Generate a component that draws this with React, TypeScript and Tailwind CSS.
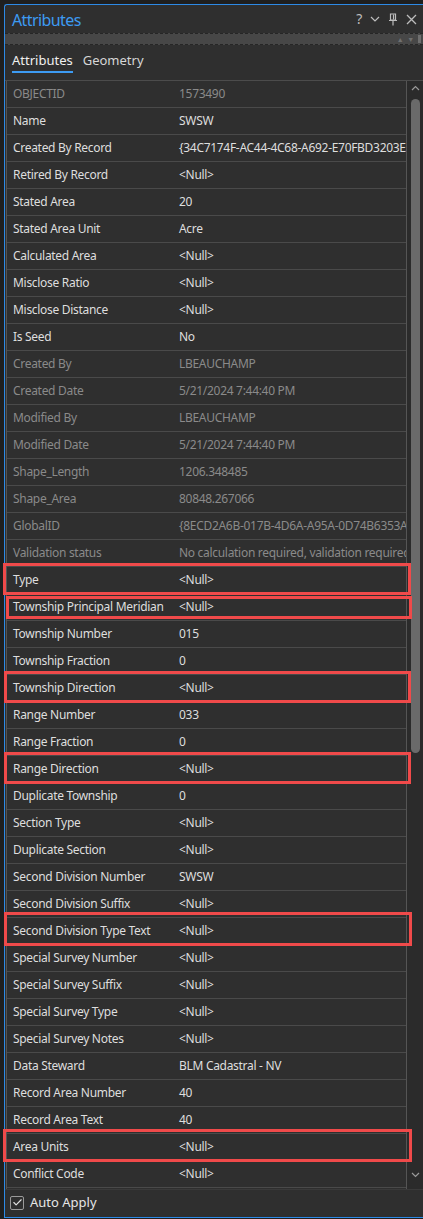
import { Check } from "lucide-react";

type Row = { label: string; value: string; dim?: boolean };

const rows: Row[] = [
  { label: "OBJECTID", value: "1573490", dim: true },
  { label: "Name", value: "SWSW" },
  { label: "Created By Record", value: "{34C7174F-AC44-4C68-A692-E70FBD3203EA}" },
  { label: "Retired By Record", value: "<Null>" },
  { label: "Stated Area", value: "20" },
  { label: "Stated Area Unit", value: "Acre" },
  { label: "Calculated Area", value: "<Null>" },
  { label: "Misclose Ratio", value: "<Null>" },
  { label: "Misclose Distance", value: "<Null>" },
  { label: "Is Seed", value: "No" },
  { label: "Created By", value: "LBEAUCHAMP", dim: true },
  { label: "Created Date", value: "5/21/2024 7:44:40 PM", dim: true },
  { label: "Modified By", value: "LBEAUCHAMP", dim: true },
  { label: "Modified Date", value: "5/21/2024 7:44:40 PM", dim: true },
  { label: "Shape_Length", value: "1206.348485", dim: true },
  { label: "Shape_Area", value: "80848.267066", dim: true },
  { label: "GlobalID", value: "{8ECD2A6B-017B-4D6A-A95A-0D74B6353A1F}", dim: true },
  { label: "Validation status", value: "No calculation required, validation required", dim: true },
  { label: "Type", value: "<Null>" },
  { label: "Township Principal Meridian", value: "<Null>" },
  { label: "Township Number", value: "015" },
  { label: "Township Fraction", value: "0" },
  { label: "Township Direction", value: "<Null>" },
  { label: "Range Number", value: "033" },
  { label: "Range Fraction", value: "0" },
  { label: "Range Direction", value: "<Null>" },
  { label: "Duplicate Township", value: "0" },
  { label: "Section Type", value: "<Null>" },
  { label: "Duplicate Section", value: "<Null>" },
  { label: "Second Division Number", value: "SWSW" },
  { label: "Second Division Suffix", value: "<Null>" },
  { label: "Second Division Type Text", value: "<Null>" },
  { label: "Special Survey Number", value: "<Null>" },
  { label: "Special Survey Suffix", value: "<Null>" },
  { label: "Special Survey Type", value: "<Null>" },
  { label: "Special Survey Notes", value: "<Null>" },
  { label: "Data Steward", value: "BLM Cadastral - NV" },
  { label: "Record Area Number", value: "40" },
  { label: "Record Area Text", value: "40" },
  { label: "Area Units", value: "<Null>" },
  { label: "Conflict Code", value: "<Null>" },
];

// red annotation boxes drawn over the grid (page coordinates)
const marks = [
  { top: 563, left: 3, width: 408, height: 32 },
  { top: 596, left: 6, width: 406, height: 23 },
  { top: 671, left: 4, width: 407, height: 32 },
  { top: 752, left: 4, width: 407, height: 32 },
  { top: 912, left: 4, width: 408, height: 34 },
  { top: 1129, left: 3, width: 409, height: 33 },
];

function PinIcon() {
  return (
    <svg width="10" height="13" viewBox="0 0 10 13" fill="none" stroke="#bdbdbd" strokeWidth="1.2">
      <path d="M2.5 1h5v6h-5z" />
      <path d="M1 7.5h8" />
      <path d="M5 7.5v5" />
      <path d="M5.5 1.5v5" />
    </svg>
  );
}

export default function App() {
  return (
    <div className="relative min-h-screen bg-[#1f1f1f] pl-1 pt-1 font-['Noto_Sans','Open_Sans',sans-serif] text-[12px] tracking-[-0.3px]">
      <div className="flex h-[1214px] flex-col overflow-hidden rounded-tl-[3px] border-l border-t border-b border-[#2d8ae6] bg-[#2f2f2f]">
        {/* ── Title bar ── */}
        <div className="flex h-[28px] shrink-0 items-center justify-between pl-[7px] pr-[6px]">
          <span className="pt-[2px] text-[16px] leading-none tracking-[-0.6px] text-[#3d9bf2]">Attributes</span>
          <div className="flex items-center gap-[8px] text-[#bdbdbd]">
            <span className="text-[14px] leading-none">?</span>
            <svg width="10" height="6" viewBox="0 0 10 6" fill="none" stroke="#bdbdbd" strokeWidth="1.2">
              <path d="M1 1l4 4 4-4" />
            </svg>
            <PinIcon />
            <svg width="11" height="11" viewBox="0 0 11 11" fill="none" stroke="#bdbdbd" strokeWidth="1.3">
              <path d="M1 1l9 9M10 1l-9 9" />
            </svg>
          </div>
        </div>

        {/* ── Dashed toolbar strip ── */}
        <div className="flex h-[12px] shrink-0 items-center justify-end gap-[4px] border-y border-dashed border-[#262626] bg-[#474747] pr-[2px]">
          <span className="text-[7px] leading-none text-[#6f6f6f]">▲</span>
          <span className="text-[7px] leading-none text-[#6f6f6f]">▼</span>
          <span className="h-[8px] w-[3px] bg-[#6f6f6f]" />
        </div>

        {/* ── Tabs ── */}
        <div className="flex h-[35px] shrink-0 items-start gap-[10px] pl-[7px] pt-[6px] text-[13px] tracking-normal">
          <div className="flex flex-col">
            <span className="leading-[18px] text-[#f0f0f0]">Attributes</span>
            <span className="mt-[2px] h-[2px] bg-[#3d9bf2]" />
          </div>
          <span className="leading-[18px] text-[#d6d6d6]">Geometry</span>
        </div>

        {/* ── Attribute grid + scrollbar ── */}
        <div className="flex min-h-0 flex-1 border-t border-[#4c4c4c]">
          <div className="ml-px min-w-0 flex-1 overflow-hidden border-l border-[#555555]">
            {rows.map((r) => (
              <div
                key={r.label}
                className="grid h-[27px] grid-cols-[166px_1fr] items-center border-b border-[#4a4a4a]"
              >
                <span className={`truncate pl-[6px] ${r.dim ? "text-[#8a8a8a]" : "text-[#dedede]"}`}>
                  {r.label}
                </span>
                <span
                  className={`overflow-hidden whitespace-nowrap pl-[6px] ${r.dim ? "text-[#8a8a8a]" : "text-[#dedede]"}`}
                >
                  {r.value}
                </span>
              </div>
            ))}
          </div>
          <div className="flex w-[17px] shrink-0 flex-col items-center border-l border-[#555555] bg-[#2b2b2b] pt-[4px]">
            <svg width="9" height="6" viewBox="0 0 9 6" fill="none" stroke="#9a9a9a" strokeWidth="1.2">
              <path d="M1 5l3.5-3.5L8 5" />
            </svg>
            <div className="mt-[8px] h-[654px] w-[9px] rounded-full bg-[#6a6a6a]" />
            <div className="flex-1" />
            <svg width="9" height="6" viewBox="0 0 9 6" fill="none" stroke="#9a9a9a" strokeWidth="1.2" className="mb-[11px]">
              <path d="M1 1l3.5 3.5L8 1" />
            </svg>
          </div>
        </div>

        {/* ── Footer ── */}
        <div className="flex h-[28px] shrink-0 items-center gap-[6px] border-t border-[#3a3a3a] pb-[2px] pl-[5px] text-[13px] tracking-normal">
          <span className="flex h-[14px] w-[14px] items-center justify-center rounded-[2px] border border-[#9a9a9a] bg-[#2f2f2f]">
            <Check size={11} strokeWidth={2.5} color="#e0e0e0" />
          </span>
          <span className="text-[#e6e6e6]">Auto Apply</span>
        </div>
      </div>

      {marks.map((m, i) => (
        <div
          key={i}
          className="pointer-events-none absolute border-[3px] border-[#f04a4a]"
          style={{ top: m.top, left: m.left, width: m.width, height: m.height }}
        />
      ))}
    </div>
  );
}
